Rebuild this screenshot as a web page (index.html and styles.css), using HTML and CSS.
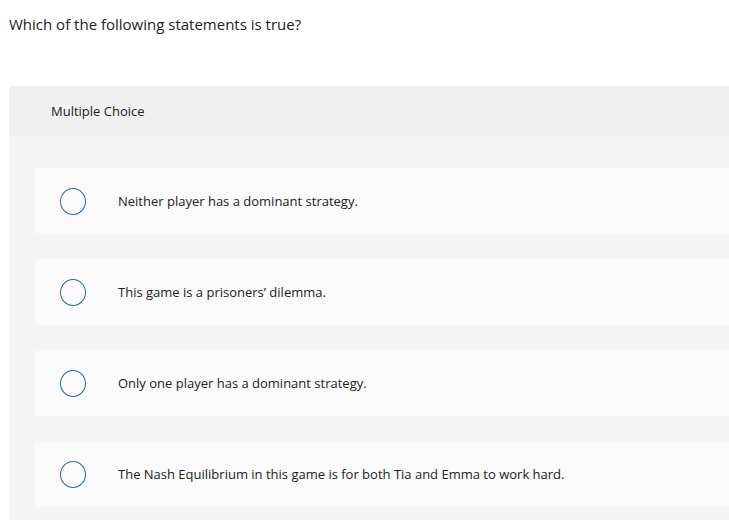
FILE: index.html
```html
<!DOCTYPE html>
<html>
<head>
<meta charset="utf-8">
<link rel="stylesheet" href="styles.css">
</head>
<body>
<p class="prompt">Which of the following statements is true?</p>
<section class="panel">
  <div class="panel-head">Multiple Choice</div>
  <div class="options">
    <label class="option"><span class="radio"></span><span class="text">Neither player has a dominant strategy.</span></label>
    <label class="option"><span class="radio"></span><span class="text">This game is a prisoners’ dilemma.</span></label>
    <label class="option"><span class="radio"></span><span class="text">Only one player has a dominant strategy.</span></label>
    <label class="option"><span class="radio"></span><span class="text">The Nash Equilibrium in this game is for both Tia and Emma to work hard.</span></label>
  </div>
</section>
</body>
</html>
```
FILE: styles.css
```css
html, body {
  margin: 0;
  padding: 0;
  background: #ffffff;
  overflow: hidden;
}
body {
  font-family: "Open Sans", "Lato", sans-serif;
  color: #222222;
  padding-left: 9px;
}
.prompt {
  margin: 0;
  padding-top: 14px;
  font-size: 15px;
  line-height: 20px;
  height: 72px;
}
.panel {
  background: #f5f5f5;
  border-top-left-radius: 3px;
  overflow: hidden;
}
.panel-head {
  background: #f0f0f0;
  height: 50px;
  box-sizing: border-box;
  padding-left: 42px;
  display: flex;
  align-items: center;
  font-size: 13px;
}
.options {
  display: flex;
  flex-direction: column;
  gap: 25px;
  padding: 32px 0 20px 26px;
}
.option {
  height: 66px;
  background: #fafafa;
  border-radius: 3px 0 0 3px;
  display: flex;
  align-items: center;
  padding-left: 25px;
  font-size: 13px;
}
.radio {
  width: 24px;
  height: 25px;
  border: 1.5px solid #2c6aa8;
  border-radius: 50%;
  flex: none;
}
.text {
  margin-left: 32px;
}
```
